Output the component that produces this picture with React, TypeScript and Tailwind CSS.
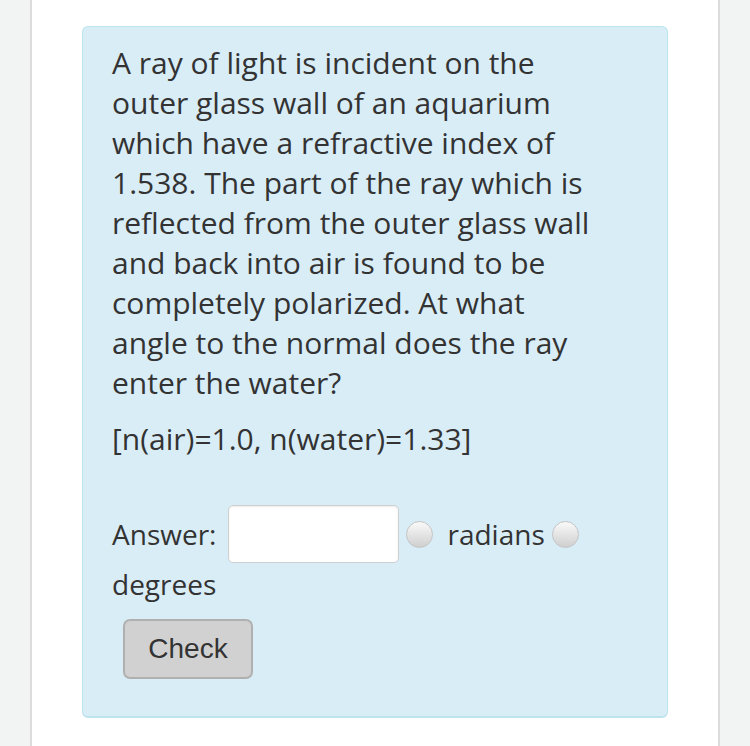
export default function App() {
  return (
    <div className="min-h-[746px] w-[750px] bg-[#f2f3f3] flex">
      {/* page column */}
      <div className="ml-[30px] w-[690px] min-h-[746px] bg-white border-x-2 border-[#dcdcdc] pt-[26px] pl-[50px]">
        <div
          className="w-[586px] rounded-[6px] border border-[#bce3ee] border-b-2 bg-[#d9edf7] pt-[16px] pb-[37px] pl-[29px] pr-[69px] text-[#333] text-[30px] leading-[40px]"
          style={{ fontFamily: '"Open Sans", sans-serif' }}
        >
          <p>
            A ray of light is incident on the outer glass wall of an aquarium which have a
            refractive index of 1.538. The part of the ray which is reflected from the outer
            glass wall and back into air is found to be completely polarized. At what angle to
            the normal does the ray enter the water?
          </p>
          <p className="mt-[16px]">[n(air)=1.0, n(water)=1.33]</p>

          <div className="mt-[46px] text-[28px]">
            <div className="flex items-center h-[58px]">
              <span>Answer:</span>
              <input
                type="text"
                className="ml-[12px] shrink-0 w-[171px] h-[58px] rounded-[5px] border border-[#cfcfcf] bg-white shadow-[inset_0_1px_2px_rgba(0,0,0,0.08)] outline-none"
              />
              <span className="ml-[7px] shrink-0 w-[27px] h-[27px] rounded-full border border-[#c4c4c4] bg-gradient-to-b from-[#fafafa] to-[#cfcfcf]" />
              <span className="ml-[14px]">radians</span>
              <span className="ml-[7px] shrink-0 w-[27px] h-[27px] rounded-full border border-[#c4c4c4] bg-gradient-to-b from-[#fafafa] to-[#cfcfcf]" />
            </div>
            <div className="mt-[1px]">degrees</div>
          </div>

          <button
            type="button"
            className="mt-[15px] ml-[11px] w-[130px] h-[60px] rounded-[7px] border-2 border-[#b0b0b0] bg-[#d1d1d1] text-[28px] text-[#333]"
            style={{ fontFamily: '"Liberation Sans", Arial, sans-serif' }}
          >
            Check
          </button>
        </div>
      </div>
    </div>
  )
}
